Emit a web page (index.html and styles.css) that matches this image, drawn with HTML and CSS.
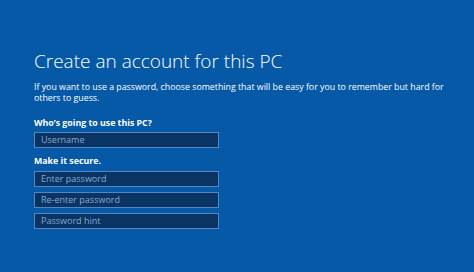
FILE: index.html
```html
<!DOCTYPE html>
<html>
<head>
<meta charset="utf-8">
<link rel="stylesheet" href="styles.css">
</head>
<body>
<main class="screen">
  <h1 class="title">Create an account for this PC</h1>
  <p class="intro">If you want to use a password, choose something that will be easy for you to remember but hard for others to guess.</p>
  <h2 class="label">Who’s going to use this PC?</h2>
  <div class="field">Username</div>
  <h2 class="label secure">Make it secure.</h2>
  <div class="fields">
    <div class="field">Enter password</div>
    <div class="field">Re-enter password</div>
    <div class="field">Password hint</div>
  </div>
</main>
</body>
</html>
```
FILE: styles.css
```css
html, body {
  margin: 0;
  padding: 0;
  width: 474px;
  height: 272px;
  overflow: hidden;
  background: #0559a7;
}
.screen {
  box-sizing: border-box;
  width: 474px;
  height: 272px;
  padding: 48px 10px 0 34px;
  font-family: "Open Sans", "Liberation Sans", sans-serif;
  color: #ffffff;
  display: flex;
  flex-direction: column;
  align-items: flex-start;
}
.title {
  margin: 0;
  font-size: 19px;
  font-weight: 300;
  line-height: 26px;
}
.intro {
  margin: 8px 0 0 0;
  font-size: 8.8px;
  line-height: 11px;
  font-weight: 400;
  width: 420px;
}
.label {
  margin: 14px 0 0 0;
  font-size: 8.8px;
  font-weight: 700;
  line-height: 11px;
}
.label.secure {
  margin-top: 8px;
}
.field {
  box-sizing: border-box;
  width: 185px;
  height: 16px;
  margin-top: 3px;
  border: 1px solid #5586c2;
  background: #0a3463;
  color: #8ba8cc;
  font-size: 9px;
  line-height: 14px;
  padding-left: 6px;
}
.fields {
  display: flex;
  flex-direction: column;
  gap: 5px;
  margin-top: 4px;
}
.fields .field {
  margin-top: 0;
}
```
